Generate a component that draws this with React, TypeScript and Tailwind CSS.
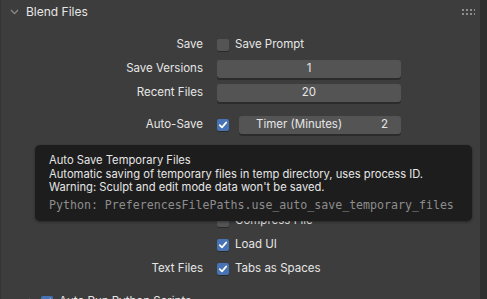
import type { ReactNode } from "react";

const FONT = { fontFamily: "Inter, 'DejaVu Sans', sans-serif" };

function Check({ on }: { on?: boolean }) {
  return (
    <span
      className={`flex h-[12px] w-[12px] shrink-0 items-center justify-center rounded-[2px] shadow-[0_1px_0_#2a2a2a] ${
        on ? "bg-[#4772b3]" : "bg-[#545454]"
      }`}
    >
      {on && (
        <svg width="10" height="10" viewBox="0 0 10 10" fill="none">
          <path
            d="M1.8 5.2 L4 7.4 L8.3 2.4"
            stroke="#ffffff"
            strokeWidth="1.7"
            strokeLinecap="round"
            strokeLinejoin="round"
          />
        </svg>
      )}
    </span>
  );
}

function Field({ children, className = "" }: { children: ReactNode; className?: string }) {
  return (
    <div
      className={`flex h-[18px] items-center rounded-[3px] bg-[#545454] text-[#e6e6e6] shadow-[0_2px_0_#2b2b2b] ${className}`}
    >
      {children}
    </div>
  );
}

function Row({ label, children }: { label?: string; children: ReactNode }) {
  return (
    <div className="grid h-[24px] grid-cols-[202px_184px] items-center gap-x-[14px]">
      <span className="text-right text-[#e6e6e6]">{label}</span>
      <div className="flex items-center">{children}</div>
    </div>
  );
}

function CheckRow({ label, text, on }: { label?: string; text: string; on?: boolean }) {
  return (
    <Row label={label}>
      <Check on={on} />
      <span className="ml-[6px] text-[#e6e6e6]">{text}</span>
    </Row>
  );
}

export default function App() {
  return (
    <div
      className="relative flex h-[299px] w-[487px] overflow-hidden bg-[#3d3d3d] text-[11.5px] leading-none"
      style={FONT}
    >
      <div className="flex-1 border-l border-[#353535]">
        {/* Panel header */}
        <div className="flex h-[24px] items-center justify-between pl-[9px] pr-[5px]">
          <div className="flex items-center gap-[7px]">
            <svg width="9" height="6" viewBox="0 0 9 6" fill="none">
              <path d="M1 1 L4.5 4.6 L8 1" stroke="#8c8c8c" strokeWidth="1.3" />
            </svg>
            <span className="text-[12px] text-[#e6e6e6]">Blend Files</span>
          </div>
          <svg width="13" height="7" viewBox="0 0 13 7">
            {[0, 4, 8, 12].map((x) =>
              [0, 4].map((y) => (
                <rect key={`${x}-${y}`} x={x} y={y} width="2" height="2" fill="#8f8f8f" />
              ))
            )}
          </svg>
        </div>

        <div className="pt-[9px]">
          <CheckRow label="Save" text="Save Prompt" />
          <Row label="Save Versions">
            <Field className="w-[184px] justify-center">1</Field>
          </Row>
          <Row label="Recent Files">
            <Field className="w-[184px] justify-center">20</Field>
          </Row>
          <div className="h-[8px]" />
          <Row label="Auto-Save">
            <Check on />
            <Field className="ml-[10px] w-[162px] justify-between pl-[17px] pr-[13px]">
              <span>Timer (Minutes)</span>
              <span>2</span>
            </Field>
          </Row>
          {/* rows hidden behind the tooltip */}
          <div className="h-[72px]" />
          <CheckRow text="Compress File" />
          <CheckRow text="Load UI" on />
          <CheckRow label="Text Files" text="Tabs as Spaces" on />

          {/* Next sub-panel, cut off by the window */}
          <div className="mt-[15px] flex items-center pl-[27px]">
            <svg width="6" height="9" viewBox="0 0 6 9" fill="none">
              <path d="M1 1 L4.6 4.5 L1 8" stroke="#8c8c8c" strokeWidth="1.3" />
            </svg>
            <span className="ml-[7px]">
              <Check on />
            </span>
            <span className="ml-[6px] text-[#e6e6e6]">Auto Run Python Scripts</span>
          </div>
        </div>
      </div>
      <div className="w-[7px] bg-[#2f2f2f]" />

      {/* Tooltip */}
      <div className="absolute left-[35px] top-[145px] h-[76px] w-[437px] rounded-[5px] bg-[#1d1d1d] pl-[14px] pt-[9px] shadow-[0_1px_3px_rgba(0,0,0,0.4)]">
        <p className="text-[11.2px] leading-[13.5px] text-[#e6e6e6]">Auto Save Temporary Files</p>
        <p className="text-[11.2px] leading-[13.5px] text-[#e6e6e6]">
          Automatic saving of temporary files in temp directory, uses process ID.
        </p>
        <p className="text-[11.2px] leading-[13.5px] text-[#e6e6e6]">
          Warning: Sculpt and edit mode data won't be saved.
        </p>
        <p
          className="mt-[4px] text-[11.6px] leading-[13px] text-[#8d8d8d]"
          style={{ fontFamily: "'DejaVu Sans Mono', monospace" }}
        >
          Python: PreferencesFilePaths.use_auto_save_temporary_files
        </p>
      </div>
    </div>
  );
}
